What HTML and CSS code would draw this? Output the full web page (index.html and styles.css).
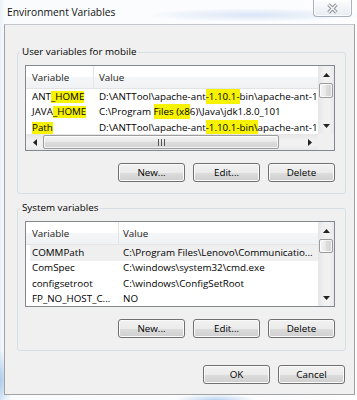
FILE: index.html
```html
<!DOCTYPE html>
<html>
<head>
<meta charset="utf-8">
<title>Environment Variables</title>
<link rel="stylesheet" href="styles.css">
</head>
<body>
<div class="window">
  <div class="titlebar">
    <span class="title">Environment Variables</span>
    <div class="close">
      <svg width="13" height="11" viewBox="0 0 13 11">
        <path d="M2.5 1.5 L10.5 9.5 M10.5 1.5 L2.5 9.5" stroke="#8a8f96" stroke-width="3.4" fill="none"/>
        <path d="M2.5 1.5 L10.5 9.5 M10.5 1.5 L2.5 9.5" stroke="#ffffff" stroke-width="1.4" fill="none"/>
      </svg>
    </div>
  </div>
  <div class="client">
    <fieldset class="group g1">
      <legend>User variables for mobile</legend>
      <div class="group-body">
        <div class="lv lv1">
          <div class="lv-content">
            <div class="lv-header">
              <div class="c1">Variable</div><div class="c2">Value</div>
            </div>
            <div class="lv-row">
              <div class="c1">ANT<span class="hl">_HOME</span></div>
              <div class="c2">D:\ANTTool\apache-ant<span class="hl">-1.10.1-</span>bin\apache-ant-1</div>
            </div>
            <div class="lv-row">
              <div class="c1">JAVA<span class="hl">_HOME</span></div>
              <div class="c2">C:\Program <span class="hl">Files (x8</span>6)\Java\jdk1.8.0_101</div>
            </div>
            <div class="lv-row">
              <div class="c1"><span class="hl">Path</span></div>
              <div class="c2">D:\ANTTool\apache-ant<span class="hl">-1.10.1-bin\</span>apache-ant-1</div>
            </div>
          </div>
          <div class="vscroll">
            <div class="sb-btn"><svg width="7" height="4" viewBox="0 0 7 4"><polygon points="0,4 3.5,0 7,4" fill="#222"/></svg></div>
            <div class="vtrack"><div class="vthumb"></div></div>
            <div class="sb-btn"><svg width="7" height="4" viewBox="0 0 7 4"><polygon points="0,0 7,0 3.5,4" fill="#222"/></svg></div>
          </div>
          <div class="hscroll">
            <div class="sb-btn"><svg width="4" height="7" viewBox="0 0 4 7"><polygon points="4,0 4,7 0,3.5" fill="#222"/></svg></div>
            <div class="htrack">
              <div class="hthumb">
                <svg width="7" height="7" viewBox="0 0 7 7"><path d="M0.5 0 V7 M3.5 0 V7 M6.5 0 V7" stroke="#555" stroke-width="1"/></svg>
              </div>
            </div>
            <div class="sb-btn"><svg width="4" height="7" viewBox="0 0 4 7"><polygon points="0,0 0,7 4,3.5" fill="#222"/></svg></div>
          </div>
          <div class="corner"></div>
        </div>
        <div class="btn-row">
          <button class="btn">New...</button>
          <button class="btn">Edit...</button>
          <button class="btn">Delete</button>
        </div>
      </div>
    </fieldset>

    <fieldset class="group g2">
      <legend>System variables</legend>
      <div class="group-body">
        <div class="lv lv2">
          <div class="lv-content">
            <div class="lv-header">
              <div class="c1">Variable</div><div class="c2">Value</div>
            </div>
            <div class="lv-row sel">
              <div class="c1">COMMPath</div>
              <div class="c2">C:\Program Files\Lenovo\Communicatio...</div>
            </div>
            <div class="lv-row">
              <div class="c1">ComSpec</div>
              <div class="c2">C:\windows\system32\cmd.exe</div>
            </div>
            <div class="lv-row">
              <div class="c1">configsetroot</div>
              <div class="c2">C:\windows\ConfigSetRoot</div>
            </div>
            <div class="lv-row">
              <div class="c1">FP_NO_HOST_C...</div>
              <div class="c2">NO</div>
            </div>
          </div>
          <div class="vscroll">
            <div class="sb-btn"><svg width="7" height="4" viewBox="0 0 7 4"><polygon points="0,4 3.5,0 7,4" fill="#222"/></svg></div>
            <div class="vtrack"><div class="vthumb"></div></div>
            <div class="sb-btn"><svg width="7" height="4" viewBox="0 0 7 4"><polygon points="0,0 7,0 3.5,4" fill="#222"/></svg></div>
          </div>
        </div>
        <div class="btn-row">
          <button class="btn">New...</button>
          <button class="btn">Edit...</button>
          <button class="btn">Delete</button>
        </div>
      </div>
    </fieldset>

    <div class="dlg-buttons">
      <button class="btn">OK</button>
      <button class="btn">Cancel</button>
    </div>
  </div>
</div>
</body>
</html>
```

FILE: styles.css
```css
* { box-sizing: border-box; }

html, body {
  margin: 0;
  padding: 0;
}

body {
  width: 357px;
  height: 400px;
  overflow: hidden;
  font-family: "Open Sans", "Noto Sans", sans-serif;
  font-size: 9.8px;
  color: #000;
  background:
    radial-gradient(ellipse 14px 30px at 0px 380px, rgba(120, 170, 225, 0.55), transparent),
    radial-gradient(ellipse 40px 6px at 215px 400px, rgba(120, 170, 225, 0.5), transparent),
    linear-gradient(to right, #e9f1f8 0px, #f9fbfd 5px, #fdfdfe 100%);
}

.window {
  display: flex;
  flex-direction: column;
  height: 400px;
}

.titlebar {
  height: 24px;
  display: flex;
  justify-content: space-between;
  align-items: flex-start;
  padding-left: 7px;
  background:
    radial-gradient(ellipse 110px 7px at 255px 15px, rgba(150, 185, 230, 0.35), transparent);
}

.title {
  margin-top: 5px;
  line-height: 14px;
  font-size: 10.3px;
  color: #111;
}

.close {
  width: 39px;
  height: 17px;
  margin-right: 5px;
  border: 1px solid #a9b1bd;
  border-top: none;
  border-radius: 0 0 4px 4px;
  background: linear-gradient(#fbfcfd, #e9edf2);
  box-shadow: inset 0 0 0 1px rgba(255, 255, 255, 0.8);
  display: flex;
  align-items: center;
  justify-content: center;
}

.client {
  margin: 0 2px 0 4px;
  height: 371px;
  background: #f0f0f0;
  border: 1px solid #a2a2a2;
  border-top-color: #c3c6ca;
  padding: 20px 8px 0 12px;
  display: flex;
  flex-direction: column;
}

.group {
  margin: 0;
  border: 1px solid #d5dfe5;
  border-radius: 3px;
  padding: 0 10px 0 2px;
  min-width: 0;
}

.group legend {
  padding: 0 2px;
  line-height: 14px;
}

.g1 { padding-bottom: 11px; }
.g2 { margin-top: 7px; padding-bottom: 12px; }

.group-body {
  padding: 6px 0 0 5px;
}

.lv {
  border: 1px solid #828790;
  background: #fff;
  display: grid;
  grid-template-columns: 1fr 16px;
}

.lv1 {
  height: 86px;
  grid-template-rows: 1fr 16px;
}

.lv2 {
  height: 86px;
  grid-template-rows: 1fr;
}

.lv-content {
  overflow: hidden;
  min-width: 0;
}

.lv-header {
  display: flex;
  height: 23px;
  align-items: center;
  background: linear-gradient(#ffffff 0%, #ffffff 50%, #f5f6f7 50%, #f1f2f4 100%);
  border-bottom: 1px solid #e2e3e5;
  color: #222;
}

.lv-header .c1 {
  align-self: stretch;
  display: flex;
  align-items: center;
  border-right: 1px solid #e3e4e6;
}

.lv-row {
  display: flex;
  height: 15.5px;
  line-height: 12px;
  align-items: center;
  white-space: nowrap;
}

.c1 {
  flex: none;
  padding-left: 6px;
  overflow: hidden;
  white-space: nowrap;
}

.c2 {
  flex: none;
  white-space: nowrap;
}

.lv1 .c1 { width: 68px; }
.lv1 .c2 { padding-left: 5px; }
.lv2 .c1 { width: 93px; }
.lv2 .c2 { padding-left: 4px; }

.lv-row.sel {
  background: linear-gradient(to right, transparent 4px, #efefef 4px);
}

.hl {
  background: #f6f200;
  padding: 1px 0;
}

.vscroll {
  grid-row: 1;
  grid-column: 2;
  display: flex;
  flex-direction: column;
  background: linear-gradient(to right, #e6e6e6, #f1f1f1 40%, #f1f1f1 70%, #e9e9e9);
}

.sb-btn {
  flex: none;
  width: 16px;
  height: 17px;
  display: flex;
  align-items: center;
  justify-content: center;
}

.vtrack {
  flex: 1;
  padding: 0 1px;
}

.vthumb {
  height: 15px;
  border: 1px solid #9c9c9c;
  border-radius: 2px;
  background: linear-gradient(to right, #f4f4f4, #e7e7e7 50%, #dcdcdc 51%, #d4d4d4);
  box-shadow: inset 0 0 0 1px rgba(255, 255, 255, 0.7);
}

.lv2 .vthumb { height: 14px; }

.hscroll {
  grid-row: 2;
  grid-column: 1;
  display: flex;
  background: linear-gradient(#e6e6e6, #f1f1f1 40%, #f1f1f1 70%, #e9e9e9);
}

.hscroll .sb-btn {
  width: 17px;
  height: 16px;
}

.htrack {
  flex: 1;
  padding: 1px 22px 1px 0;
  display: flex;
}

.hthumb {
  flex: 1;
  border: 1px solid #9c9c9c;
  border-radius: 2px;
  background: linear-gradient(#f4f4f4, #e7e7e7 50%, #dcdcdc 51%, #d4d4d4);
  box-shadow: inset 0 0 0 1px rgba(255, 255, 255, 0.7);
  display: flex;
  align-items: center;
  justify-content: center;
}

.corner {
  grid-row: 2;
  grid-column: 2;
  background: #f0f0f0;
}

.btn-row {
  display: flex;
  justify-content: flex-end;
  gap: 8px;
  margin-top: 12px;
}

.g2 .btn-row { margin-top: 12px; }

.btn {
  width: 67px;
  height: 19px;
  margin: 0;
  padding: 0;
  font-family: "Open Sans", "Noto Sans", sans-serif;
  font-size: 9.8px;
  line-height: 17px;
  color: #000;
  border: 1px solid #707070;
  border-radius: 3px;
  background: linear-gradient(#f2f2f2 0%, #ebebeb 50%, #dddddd 51%, #cfcfcf 100%);
  box-shadow: inset 0 0 0 1px #fbfbfb;
}

.dlg-buttons {
  display: flex;
  justify-content: flex-end;
  gap: 8px;
  margin-top: 14px;
  padding-right: 1px;
}
```
